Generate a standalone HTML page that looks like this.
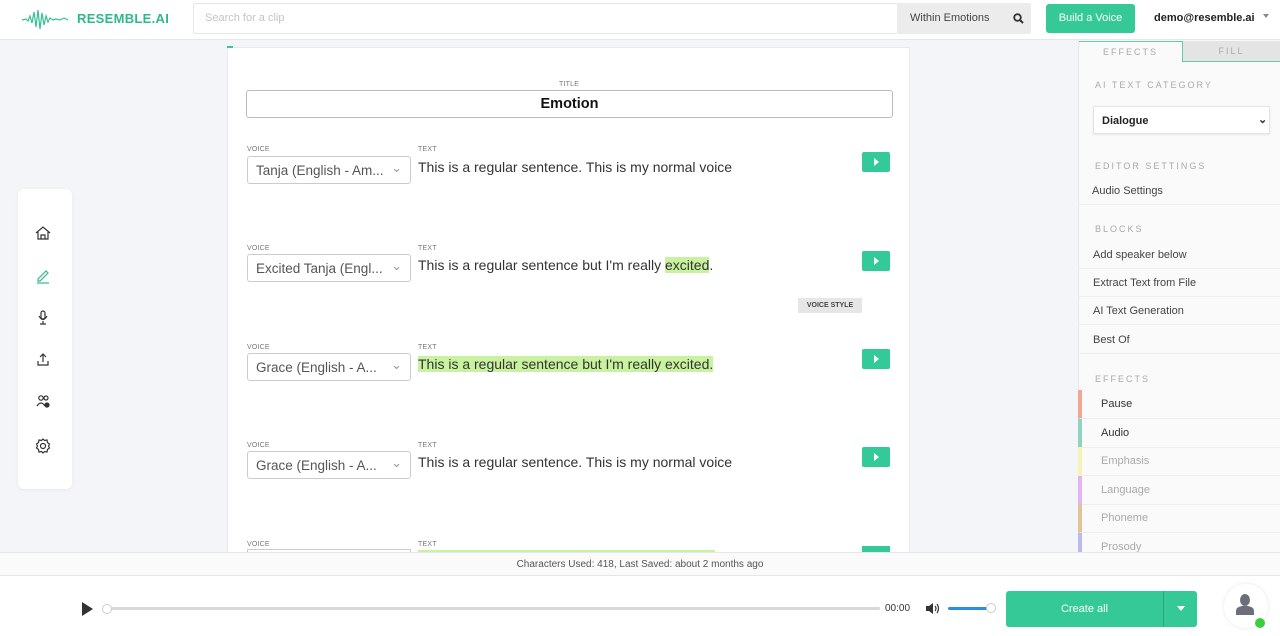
<!DOCTYPE html>
<html><head><meta charset="utf-8"><style>
*{box-sizing:border-box;margin:0;padding:0}
body{width:1280px;height:636px;overflow:hidden;background:#f4f5f9;font-family:"Liberation Sans",sans-serif;color:#333;position:relative}
.a{position:absolute}
.hdr{left:0;top:0;width:1280px;height:40px;background:#fff;border-bottom:1px solid #e4e6ec}
.lbl{font-size:7px;color:#777;letter-spacing:.2px}
.sel{width:164px;height:28px;border:1px solid #ccc;border-radius:3px;background:#fff;font-size:13.5px;color:#555;padding:6px 0 0 8px;white-space:nowrap}
.sel:after{content:"⌄";position:absolute;right:8px;top:3px;color:#999;font-size:13px}
.txt{font-size:14px;color:#333}
.hl{background:#c8f29f}
.play{width:28px;height:20px;background:#33c999;border-radius:2px}
.play:after{content:"";position:absolute;left:12px;top:6px;border-left:5px solid #fff;border-top:4px solid transparent;border-bottom:4px solid transparent}
.sec{font-size:9px;letter-spacing:2px;color:#aaa}
.row{left:1078px;width:202px;height:28px;border-bottom:1px solid #eceef2;font-size:11px;padding:8px 0 0 15px;color:#444}
.eff{left:1078px;width:202px;height:28.5px;border-bottom:1px solid #eceef2;font-size:11px;padding:8px 0 0 19px;border-left:4px solid}
</style></head><body>
<div class="a hdr"></div>
<svg class="a" style="left:20px;top:7px" width="52" height="24" viewBox="0 0 52 24"><path d="M2 13 L6 12 L8 14 L10 9 L12 16 L14 5 L16 20 L18 3 L20 22 L22 6 L24 18 L26 9 L28 15 L30 11 L33 13 L36 12 L40 13 L44 11 L48 13" fill="none" stroke="#3bbf95" stroke-width="1.2"/></svg>
<div class="a" style="left:77px;top:11px;font-size:13px;font-weight:bold;color:#2db98c;letter-spacing:.3px">RESEMBLE.AI</div>
<div class="a" style="left:193px;top:3px;width:705px;height:31px;border:1px solid #e6e6e6;border-radius:2px;background:#fff"></div>
<div class="a" style="left:205px;top:12px;font-size:11px;color:#c4c4c4">Search for a clip</div>
<div class="a" style="left:897px;top:3px;width:134px;height:31px;background:#ececec;border-radius:0 2px 2px 0"></div>
<div class="a" style="left:910px;top:12px;font-size:11px;color:#444">Within Emotions</div>
<svg class="a" style="left:1013px;top:13px" width="11" height="11" viewBox="0 0 11 11"><circle cx="4.5" cy="4.5" r="3.3" fill="none" stroke="#333" stroke-width="1.8"/><path d="M7 7 L10 10" stroke="#333" stroke-width="2"/></svg>
<div class="a" style="left:1046px;top:4px;width:89px;height:29px;background:#35c997;border-radius:3px;color:#fff;font-size:11px;text-align:center;line-height:29px">Build a Voice</div>
<div class="a" style="left:1154px;top:12px;font-size:11px;font-weight:bold;color:#222">demo@resemble.ai</div>
<div class="a" style="left:1263px;top:14px;border-top:4px solid #888;border-left:3px solid transparent;border-right:3px solid transparent"></div>

<div class="a" style="left:18px;top:189px;width:54px;height:300px;background:#fff;border-radius:6px;box-shadow:0 1px 3px rgba(0,0,0,.06)"></div>
<svg class="a" style="left:34px;top:224px" width="18" height="240" viewBox="0 0 18 240" fill="none" stroke="#333" stroke-width="1.2">
<path d="M2 9 L9 3 L16 9 M4 8 V15 H14 V8 M7 15 V11 H11 V15"/>
<path d="M4 55 L12 47 L14 49 L6 57 H4 Z" stroke="#2db98c"/><path d="M3 59 H15" stroke="#2db98c"/>
<rect x="7" y="87" width="4" height="8" rx="2"/><path d="M5 92 Q9 99 13 92 M9 97 V100 M6 100 H12"/>
<path d="M9 130 V138 M6 133 L9 130 L12 133 M4 137 V141 H14 V137"/>
<circle cx="7" cy="174" r="2.2"/><path d="M3 182 Q7 176 11 182"/><circle cx="12" cy="174" r="2"/><circle cx="13" cy="181" r="2" fill="#333"/>
<circle cx="9" cy="222" r="2.5"/><path d="M9 215 L10.5 216.5 L13 216 L13.5 218.5 L15.5 220 L14.5 222 L15.5 224 L13.5 225.5 L13 228 L10.5 227.5 L9 229 L7.5 227.5 L5 228 L4.5 225.5 L2.5 224 L3.5 222 L2.5 220 L4.5 218.5 L5 216 L7.5 216.5 Z"/>
</svg>

<div class="a" style="left:227px;top:47px;width:683px;height:510px;background:#fff;border:1px solid #e8e8ee"></div>
<div class="a" style="left:227px;top:46px;width:6px;height:2px;background:#35c997"></div>
<div class="a lbl" style="left:559px;top:81px">TITLE</div>
<div class="a" style="left:246px;top:90px;width:647px;height:28px;border:1px solid #bbb;border-radius:3px;text-align:center;font-size:14.5px;font-weight:bold;line-height:26px;color:#111">Emotion</div>

<div class="a lbl" style="left:247px;top:146px">VOICE</div><div class="a lbl" style="left:418px;top:146px">TEXT</div>
<div class="a sel" style="left:247px;top:156px">Tanja (English - Am...</div>
<div class="a txt" style="left:418px;top:159px">This is a regular sentence. This is my normal voice</div>
<div class="a play" style="left:862px;top:152px"></div>

<div class="a lbl" style="left:247px;top:245px">VOICE</div><div class="a lbl" style="left:418px;top:245px">TEXT</div>
<div class="a sel" style="left:247px;top:254px">Excited Tanja (Engl...</div>
<div class="a txt" style="left:418px;top:257px">This is a regular sentence but I'm really <span class="hl">excited</span>.</div>
<div class="a play" style="left:862px;top:251px"></div>
<div class="a" style="left:798px;top:298px;width:64px;height:15px;background:#e6e6e6;font-size:7px;font-weight:bold;color:#444;text-align:center;line-height:15px">VOICE STYLE</div>

<div class="a lbl" style="left:247px;top:344px">VOICE</div><div class="a lbl" style="left:418px;top:344px">TEXT</div>
<div class="a sel" style="left:247px;top:353px">Grace (English - A...</div>
<div class="a txt" style="left:418px;top:356px"><span class="hl">This is a regular sentence but I'm really excited.</span></div>
<div class="a play" style="left:862px;top:349px"></div>

<div class="a lbl" style="left:247px;top:442px">VOICE</div><div class="a lbl" style="left:418px;top:442px">TEXT</div>
<div class="a sel" style="left:247px;top:451px">Grace (English - A...</div>
<div class="a txt" style="left:418px;top:454px">This is a regular sentence. This is my normal voice</div>
<div class="a play" style="left:862px;top:447px"></div>

<div class="a lbl" style="left:247px;top:541px">VOICE</div><div class="a lbl" style="left:418px;top:541px">TEXT</div>
<div class="a" style="left:247px;top:549px;width:164px;height:4px;border:1px solid #ccc;border-bottom:none"></div>
<div class="a hl" style="left:418px;top:550px;width:297px;height:3px"></div>
<div class="a" style="left:862px;top:546px;width:28px;height:7px;background:#33c999"></div>

<div class="a" style="left:1078px;top:40px;width:202px;height:516px;background:#fafafa;border-left:1px solid #e8e8ec"></div>
<div class="a" style="left:1079px;top:41px;width:104px;height:21px;background:#fafafa;border-top:1px solid #5ccfa8;border-right:1px solid #5ccfa8;font-size:9px;letter-spacing:2px;color:#aaa;text-align:center;line-height:20px">EFFECTS</div>
<div class="a" style="left:1183px;top:41px;width:97px;height:21px;background:#e4e4e4;border-bottom:1px solid #5ccfa8;font-size:9px;letter-spacing:2px;color:#aaa;text-align:center;line-height:20px">FILL</div>
<div class="a sec" style="left:1095px;top:80px">AI TEXT CATEGORY</div>
<div class="a" style="left:1093px;top:106px;width:177px;height:28px;background:#fff;border:1px solid #e4e4e4;box-shadow:0 1px 2px rgba(0,0,0,.08);font-size:11px;font-weight:bold;color:#222;padding:8px 0 0 8px">Dialogue</div>
<div class="a" style="left:1258px;top:113px;font-size:11px;font-weight:bold">⌄</div>
<div class="a sec" style="left:1095px;top:161px">EDITOR SETTINGS</div>
<div class="a row" style="top:177px;padding-left:14px">Audio Settings</div>
<div class="a sec" style="left:1095px;top:224px">BLOCKS</div>
<div class="a row" style="top:241px">Add speaker below</div>
<div class="a row" style="top:269px">Extract Text from File</div>
<div class="a row" style="top:297px">AI Text Generation</div>
<div class="a row" style="top:326px">Best Of</div>
<div class="a sec" style="left:1095px;top:374px">EFFECTS</div>
<div class="a eff" style="top:390px;border-left-color:#f0a793">Pause</div>
<div class="a eff" style="top:419px;border-left-color:#8fd3c2">Audio</div>
<div class="a eff" style="top:447px;border-left-color:#f6f3b7;color:#aaa">Emphasis</div>
<div class="a eff" style="top:476px;border-left-color:#e4b4f2;color:#aaa">Language</div>
<div class="a eff" style="top:504px;border-left-color:#dfc49a;color:#aaa">Phoneme</div>
<div class="a eff" style="top:533px;border-left-color:#b9baf0;color:#aaa">Prosody</div>

<div class="a" style="left:0;top:552px;width:1280px;height:24px;background:#fafafa;border-top:1px solid #e6e6ea;border-bottom:1px solid #e6e6ea;font-size:10px;color:#555;text-align:center;line-height:23px">Characters Used: 418, Last Saved: about 2 months ago</div>
<div class="a" style="left:0;top:576px;width:1280px;height:60px;background:#fff"></div>
<div class="a" style="left:82px;top:602px;border-left:11px solid #333;border-top:7px solid transparent;border-bottom:7px solid transparent"></div>
<div class="a" style="left:106px;top:607px;width:774px;height:3px;background:#d8d8dc;border-radius:2px"></div>
<div class="a" style="left:102px;top:604px;width:10px;height:10px;border:1px solid #ccc;border-radius:50%;background:#fff"></div>
<div class="a" style="left:885px;top:603px;font-size:10px;color:#333">00:00</div>
<svg class="a" style="left:925px;top:602px" width="15" height="13" viewBox="0 0 15 13"><path d="M1 4 H4 L8 1 V12 L4 9 H1 Z" fill="#333"/><path d="M10 4 Q12 6.5 10 9 M12 2 Q15 6.5 12 11" stroke="#333" fill="none" stroke-width="1.2"/></svg>
<div class="a" style="left:948px;top:607px;width:42px;height:3px;background:#2a8fe0;border-radius:2px"></div>
<div class="a" style="left:986px;top:603px;width:10px;height:10px;border:1px solid #ccc;border-radius:50%;background:#fff"></div>
<div class="a" style="left:1006px;top:591px;width:191px;height:36px;background:#35c997;border-radius:3px"></div>
<div class="a" style="left:1006px;top:591px;width:157px;height:36px;color:#fff;font-size:11px;text-align:center;line-height:36px">Create all</div>
<div class="a" style="left:1163px;top:591px;width:1px;height:36px;background:#27a87c"></div>
<div class="a" style="left:1177px;top:606px;border-top:5px solid #fff;border-left:4px solid transparent;border-right:4px solid transparent"></div>
<div class="a" style="left:1224px;top:584px;width:44px;height:44px;border-radius:50%;background:#fff;box-shadow:0 0 4px rgba(0,0,0,.1)"></div>
<svg class="a" style="left:1234px;top:593px" width="22" height="22" viewBox="0 0 22 22"><ellipse cx="11" cy="7" rx="5" ry="6" fill="#6c6f7a"/><path d="M2 22 V18 Q2 14 8 13 H14 Q20 14 20 18 V22 Z" fill="#6c6f7a"/></svg>
<div class="a" style="left:1255px;top:618px;width:10px;height:10px;border-radius:50%;background:#3ccf3c"></div>
</body></html>
